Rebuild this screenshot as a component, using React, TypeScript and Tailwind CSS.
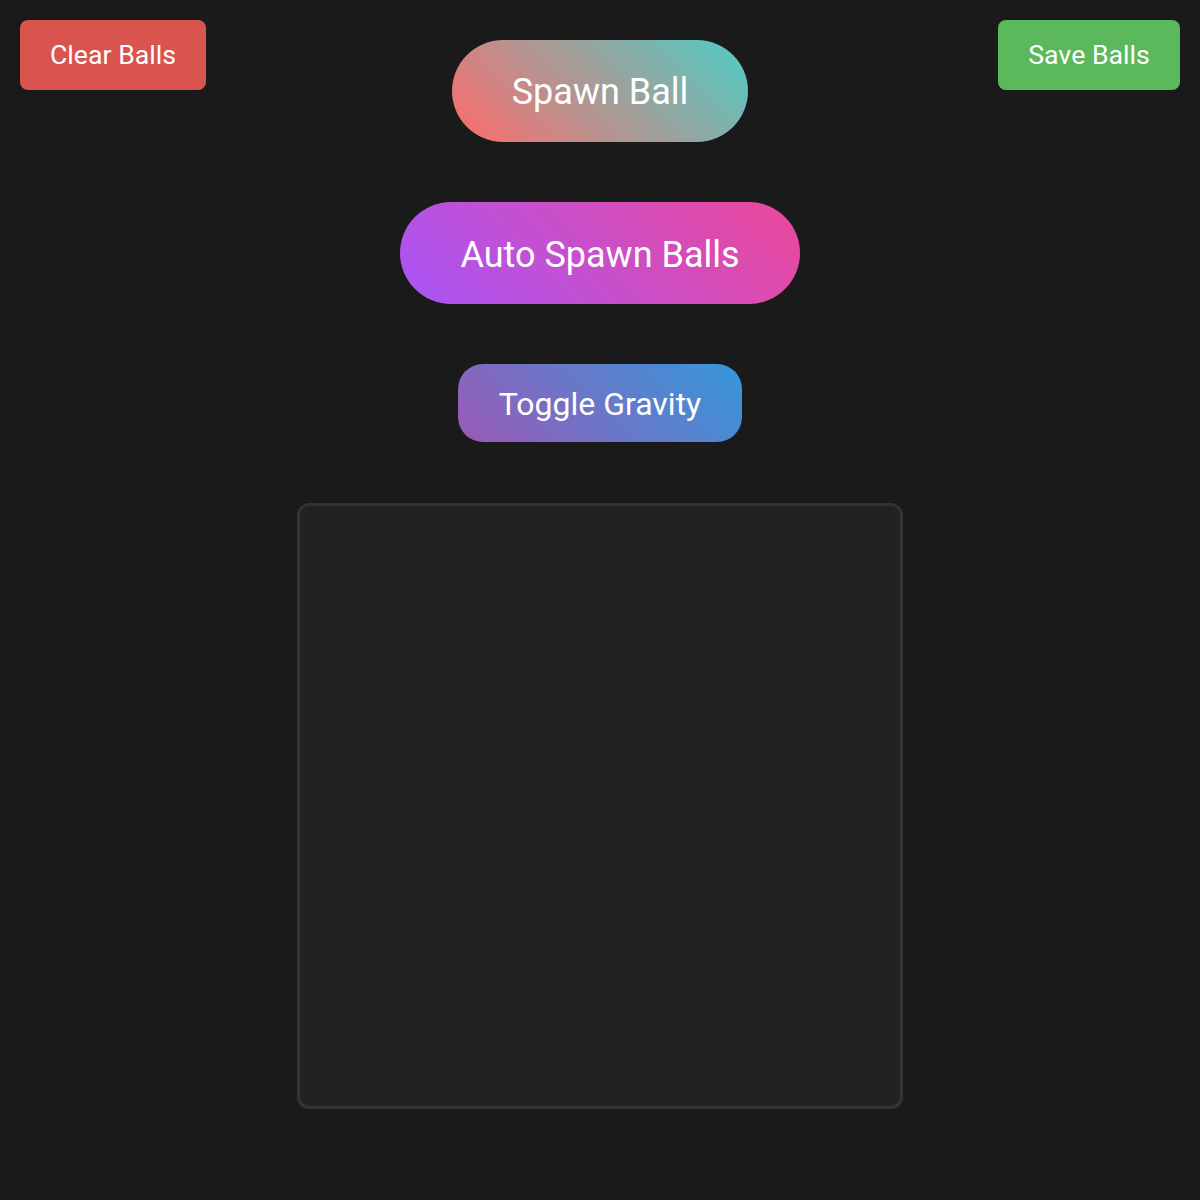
import React from "react";

export default function App() {
  return (
    <div className="min-h-screen w-full bg-[#1a1a1a] text-white" style={{ fontFamily: "Roboto, 'Liberation Sans', sans-serif" }}>
      <div className="grid grid-cols-[1fr_auto_1fr] items-start">
        <div className="justify-self-start pl-[20px] pt-[20px]">
          <button className="h-[70px] w-[186px] rounded-[8px] bg-[#d9534f] text-[26.7px] leading-none text-white">
            Clear Balls
          </button>
        </div>
        <div className="pt-[40px]">
          <button className="h-[102px] w-[296px] rounded-full bg-[linear-gradient(45deg,#ff6b6b,#4ecdc4)] pt-[2px] text-[36px] leading-none text-white">
            Spawn Ball
          </button>
        </div>
        <div className="justify-self-end pr-[20px] pt-[20px]">
          <button className="h-[70px] w-[182px] rounded-[8px] bg-[#5cb85c] text-[26.7px] leading-none text-white">
            Save Balls
          </button>
        </div>
      </div>
      <div className="flex flex-col items-center">
        <button className="mt-[60px] h-[102px] w-[400px] rounded-full bg-[linear-gradient(45deg,#a855f7,#ec4899)] pt-[3px] text-[36px] leading-none text-white">
          Auto Spawn Balls
        </button>
        <button className="mt-[60px] h-[78px] w-[284px] rounded-[25px] bg-[linear-gradient(45deg,#9b59b6,#3498db)] pt-[1px] text-[32px] leading-none text-white">
          Toggle Gravity
        </button>
        <div className="mt-[61px] h-[606px] w-[606px] rounded-[12px] border-[3px] border-[#333] bg-[#222]" />
      </div>
    </div>
  );
}
